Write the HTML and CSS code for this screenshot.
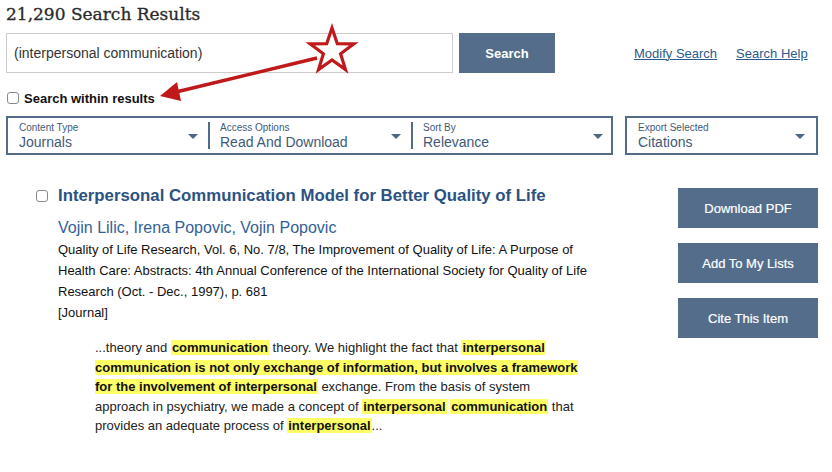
FILE: index.html
```html
<!DOCTYPE html>
<html>
<head>
<meta charset="utf-8">
<link rel="stylesheet" href="styles.css">
</head>
<body>
<div class="page">
  <h1 class="title">21,290 Search Results</h1>
  <div class="search-row">
    <div class="search-input">(interpersonal communication)</div>
    <button class="btn search-btn">Search</button>
    <div class="links">
      <a class="link">Modify Search</a>
      <a class="link">Search Help</a>
    </div>
  </div>
  <label class="within"><span class="cb"></span>Search within results</label>
  <div class="filters">
    <div class="filter-group">
      <div class="filter f1">
        <div class="ftext"><div class="flabel">Content Type</div><div class="fvalue">Journals</div></div>
        <span class="caret"></span>
      </div>
      <div class="filter f2">
        <div class="ftext"><div class="flabel">Access Options</div><div class="fvalue">Read And Download</div></div>
        <span class="caret"></span>
      </div>
      <div class="filter f3">
        <div class="ftext"><div class="flabel">Sort By</div><div class="fvalue">Relevance</div></div>
        <span class="caret"></span>
      </div>
    </div>
    <div class="export">
      <div class="filter">
        <div class="ftext"><div class="flabel">Export Selected</div><div class="fvalue">Citations</div></div>
        <span class="caret"></span>
      </div>
    </div>
  </div>
  <div class="result">
    <span class="cb rcb"></span>
    <div class="rmain">
      <a class="rtitle">Interpersonal Communication Model for Better Quality of Life</a>
      <div class="authors">Vojin Lilic, Irena Popovic, Vojin Popovic</div>
      <div class="source">Quality of Life Research, Vol. 6, No. 7/8, The Improvement of Quality of Life: A Purpose of Health Care: Abstracts: 4th Annual Conference of the International Society for Quality of Life Research (Oct. - Dec., 1997), p. 681</div>
      <div class="type">[Journal]</div>
      <p class="abstract">...theory and <mark>communication</mark> theory. We highlight the fact that <mark>interpersonal communication is not only exchange of information, but involves a framework for the involvement of interpersonal</mark> exchange. From the basis of system approach in psychiatry, we made a concept of <mark>interpersonal</mark> <mark>communication</mark> that provides an adequate process of <mark>interpersonal</mark>...</p>
    </div>
    <div class="actions">
      <button class="btn act">Download PDF</button>
      <button class="btn act">Add To My Lists</button>
      <button class="btn act">Cite This Item</button>
    </div>
  </div>
  <svg class="annot" width="832" height="472" viewBox="0 0 832 472">
    <polygon points="332,28 337.3,43.7 353.9,43.9 340.6,53.8 345.5,69.6 332,60 318.5,69.6 323.4,53.8 310.1,43.9 326.7,43.7" fill="#fff" stroke="#c0191b" stroke-width="3.2" stroke-linejoin="miter"/>
    <line x1="317" y1="58" x2="176" y2="92" stroke="#c0191b" stroke-width="3.5"/>
    <polygon points="160,96 177,82 181,101" fill="#c0191b"/>
  </svg>
</div>
</body>
</html>
```

FILE: styles.css
```css
* { box-sizing: border-box; }
html, body { margin: 0; padding: 0; background: #fff; }
body { font-family: "Liberation Sans", Arial, sans-serif; color: #222; width: 832px; height: 472px; overflow: hidden; }
.page { position: relative; padding: 0 0 0 6px; }
.title {
  margin: 0;
  padding-top: 2px;
  font-family: "DejaVu Serif", Georgia, serif;
  font-weight: normal;
  font-size: 17px;
  line-height: 24px;
  color: #2a2a2a;
  -webkit-text-stroke: 0.3px #2a2a2a;
}
.search-row { display: flex; align-items: center; margin-top: 7px; height: 40px; }
.search-input {
  width: 447px; height: 40px;
  border: 1px solid #ccc;
  font-size: 14px; color: #333;
  padding-left: 7px;
  display: flex; align-items: center;
}
.btn {
  background: #536d8a;
  color: #fff;
  border: 0;
  font-family: "Liberation Sans", Arial, sans-serif;
  font-weight: bold;
  padding: 0;
}
.search-btn { width: 96px; height: 40px; margin-left: 6px; font-size: 13px; }
.links { display: flex; gap: 19px; margin-left: 79px; }
.link { color: #2d5a8c; text-decoration: underline; font-size: 13px; }
.within {
  display: flex; align-items: center;
  margin-top: 18px; height: 14px;
  font-size: 13px; font-weight: bold; color: #111;
}
.cb {
  display: inline-block;
  width: 12px; height: 12px;
  border: 1px solid #8a8a8a;
  border-radius: 3px;
  background: #fff;
  margin: 0 5px 0 1px;
}
.filters { display: flex; margin-top: 11px; gap: 12px; }
.filter-group {
  width: 607px; height: 39px;
  border: 2px solid #526b88;
  display: flex; align-items: stretch;
  padding: 4px 0;
}
.filter {
  display: flex; align-items: center; justify-content: space-between;
  height: 100%;
}
.f1 { width: 202px; padding: 0 10px 0 11px; border-right: 2px solid #526b88; }
.f2 { width: 203px; padding: 0 10px 0 10px; border-right: 2px solid #526b88; }
.f3 { flex: 1; padding: 0 8px 0 10px; }
.export {
  width: 193px; height: 39px;
  border: 2px solid #526b88;
  padding: 4px 11px 4px 11px;
}
.flabel { font-size: 10px; color: #3f5a78; line-height: 12px; margin-top: 1px; }
.fvalue { font-size: 14px; color: #3f5a78; line-height: 17px; }
.caret {
  width: 0; height: 0;
  border-left: 5px solid transparent;
  border-right: 5px solid transparent;
  border-top: 5px solid #4d6785;
  margin-top: 1px;
}
.result { display: flex; margin-top: 30px; }
.rcb { margin: 5px 10px 0 30px; flex: none; }
.rmain { width: 560px; }
.rtitle { display: block; font-size: 16.8px; font-weight: bold; color: #2c5282; line-height: 22px; }
.authors { font-size: 16px; color: #336196; margin-top: 11px; line-height: 20px; }
.source, .type { font-size: 13px; line-height: 21px; color: #111; width: 535px; }
.source { margin-top: 1px; }
.abstract {
  margin: 15px 0 0 37px;
  font-size: 13px; line-height: 19.5px; color: #222;
  width: 490px;
}
mark { background: #ffff66; font-weight: bold; color: #111; padding: 0 1px; }
.actions { display: flex; flex-direction: column; gap: 15px; margin-left: 60px; margin-top: 3px; }
.act { width: 140px; height: 40px; font-size: 13px; font-weight: normal; -webkit-text-stroke: 0.2px #fff; }
.annot { position: absolute; left: 0; top: 0; pointer-events: none; }
```
